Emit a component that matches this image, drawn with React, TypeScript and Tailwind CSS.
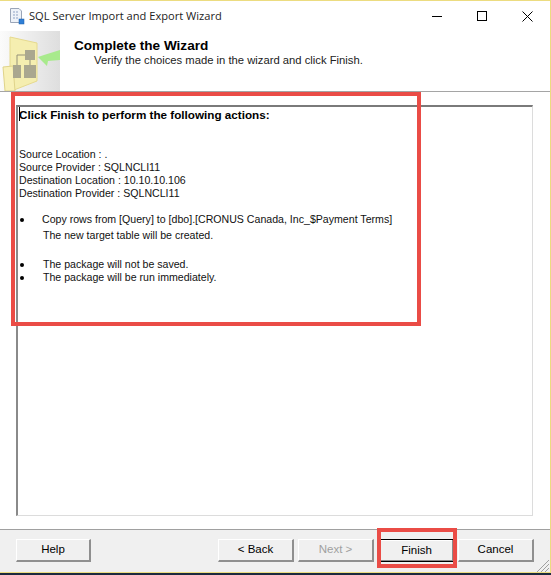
const WizardIcon = () => (
  <svg width="60" height="60" viewBox="0 0 60 60" className="block">
    <defs>
      <linearGradient id="bg" x1="0" y1="0" x2="1" y2="0">
        <stop offset="0" stopColor="#fbfbfb" />
        <stop offset="1" stopColor="#dedede" />
      </linearGradient>
    </defs>
    <rect width="60" height="60" fill="url(#bg)" />
    <path d="M10 6 L37 12 L37 50 L14 59 L10 59 Z" fill="#f5eeb0" stroke="#e6da8e" />
    <path d="M3 36 L13 35 L15 60 L5 60 Z" fill="#f8f1b8" stroke="#dfd38a" />
    <rect x="25" y="19" width="10" height="10" fill="#aaa78f" />
    <rect x="13" y="34" width="8" height="13" fill="#aaa78f" />
    <rect x="24" y="34" width="12" height="13" fill="#aaa78f" />
    <path d="M25 24 H17 V34 M30 29 V34" fill="none" stroke="#96927a" strokeWidth="1" />
    <path d="M38 26 L44 24 L60 19 L60 29 L48 30 L47 35 Z" fill="#a8ea8c" />
  </svg>
)

const DocIcon = () => (
  <svg width="16" height="18" viewBox="0 0 16 18" className="block">
    <path d="M1.5 1.5 H10 L12.5 4 V15.5 H1.5 Z" fill="#eef2f8" stroke="#9aa5b8" />
    <path d="M4 5 H9 M4 8 H10 M4 11 H10" stroke="#8fa2c4" strokeWidth="1" strokeDasharray="2 1" />
    <rect x="10" y="12" width="5" height="5" fill="#2f7fd6" stroke="#1c5ea8" strokeWidth="0.5" />
  </svg>
)

const WinButton = ({ label, disabled, isDefault, className }: { label: string; disabled?: boolean; isDefault?: boolean; className: string }) => (
  <div
    className={`${className} h-[23px] flex items-center justify-center bg-[#f0f0f0] text-[11.5px] ${disabled ? 'text-[#a0a0a0]' : 'text-black'} ${
      isDefault
        ? 'border border-black shadow-[inset_-1px_-1px_0_#8a8a8a,inset_1px_1px_0_#ffffff]'
        : 'border-t border-l border-t-white border-l-white border-r-2 border-b-2 border-r-[#8f8f8f] border-b-[#8f8f8f]'
    }`}
  >
    {label}
  </div>
)

const ResizeGrip = () => (
  <svg width="13" height="13" viewBox="0 0 13 13" className="absolute right-[1px] bottom-0">
    <path d="M13 1 L1 13 M13 5 L5 13 M13 9 L9 13" stroke="#a0a0a0" strokeWidth="1" />
  </svg>
)

const Bullet = ({ width, children }: { width: string; children: string }) => (
  <div className="flex items-center">
    <div className={`${width} shrink-0`}>
      <div className="ml-[1px] w-[4px] h-[4px] rounded-full bg-black" />
    </div>
    <span>{children}</span>
  </div>
)

export default function App() {
  return (
    <div className="relative w-[551px] h-[575px] flex flex-col bg-white overflow-hidden font-['Liberation_Sans',sans-serif]">
      <div className="flex-1 flex flex-col border-t border-r border-[#ecdc80] min-h-0">
        {/* Title bar */}
        <div className="h-[30px] flex items-center pl-[9px] shrink-0">
          <DocIcon />
          <span className="ml-[4px] text-[11.1px] text-[#222] font-['Open_Sans',sans-serif]">SQL Server Import and Export Wizard</span>
          <div className="ml-auto flex items-center">
            <svg width="11" height="11" viewBox="0 0 11 11" className="mr-[34px]"><path d="M0 5.5 H10" stroke="#000" /></svg>
            <svg width="11" height="11" viewBox="0 0 11 11" className="mr-[34px]"><rect x="0.5" y="0.5" width="9" height="9" fill="none" stroke="#000" /></svg>
            <svg width="11" height="11" viewBox="0 0 11 11" className="mr-[17px]"><path d="M0.5 0.5 L10.5 10.5 M10.5 0.5 L0.5 10.5" stroke="#000" /></svg>
          </div>
        </div>

        {/* Header */}
        <div className="h-[61px] flex border-b border-[#a5a5a5] shrink-0">
          <WizardIcon />
          <div className="pl-[14px] pt-[7px]">
            <div className="text-[13.6px] leading-[16px] font-bold text-black">Complete the Wizard</div>
            <div className="pl-[20px] text-[11.25px] leading-[13px] text-[#222]">Verify the choices made in the wizard and click Finish.</div>
          </div>
        </div>

        {/* Report */}
        <div className="flex-1 min-h-0 pl-[16px] pt-[13px] pb-[13px] pr-[17px]">
          <div className="h-full border-t-2 border-l-2 border-t-[#7a7a7a] border-l-[#8a8a8a] border-r border-b border-r-[#dcdcdc] border-b-[#dcdcdc] pl-[1px] text-[10.6px] leading-[13px] text-[#111]">
            <div className="relative font-bold text-[11.7px] leading-[15px] text-black">
              <div className="absolute left-0 top-[0px] w-px h-[14px] bg-black" />
              Click Finish to perform the following actions:
            </div>
            <div className="mt-[26px]">Source Location : .</div>
            <div>Source Provider : SQLNCLI11</div>
            <div>Destination Location : 10.10.10.106</div>
            <div>Destination Provider : SQLNCLI11</div>
            <div className="mt-[13px]">
              <Bullet width="w-[23px]">Copy rows from [Query] to [dbo].[CRONUS Canada, Inc_$Payment Terms]</Bullet>
            </div>
            <div className="mt-[3px] pl-[24px]">The new target table will be created.</div>
            <div className="mt-[16px]">
              <Bullet width="w-[24px]">The package will not be saved.</Bullet>
            </div>
            <Bullet width="w-[24px]">The package will be run immediately.</Bullet>
          </div>
        </div>

        {/* Footer */}
        <div className="relative h-[43px] bg-[#f0f0f0] border-t border-[#a0a0a0] shrink-0 flex items-start pt-[9px] pl-[16px]">
          <WinButton label="Help" className="w-[75px]" />
          <div className="ml-auto flex mr-[16px]">
            <WinButton label="< Back" className="w-[76px]" />
            <WinButton label="Next >" disabled className="w-[76px] ml-[4px]" />
            <WinButton label="Finish" isDefault className="w-[75px] ml-[5px]" />
            <WinButton label="Cancel" className="w-[76px] ml-[4px]" />
          </div>
          <ResizeGrip />
        </div>
      </div>
      <div className="h-[3px] shrink-0 border-t border-[#ecdc80] bg-[#1c2a3e]" />

      {/* Red annotations */}
      <div className="absolute left-[11px] top-[92px] w-[410px] h-[234px] border-[4px] border-[#ea4c46]" />
      <div className="absolute left-[377px] top-[528px] w-[80px] h-[40px] border-[4px] border-[#ea4c46]" />
    </div>
  )
}
